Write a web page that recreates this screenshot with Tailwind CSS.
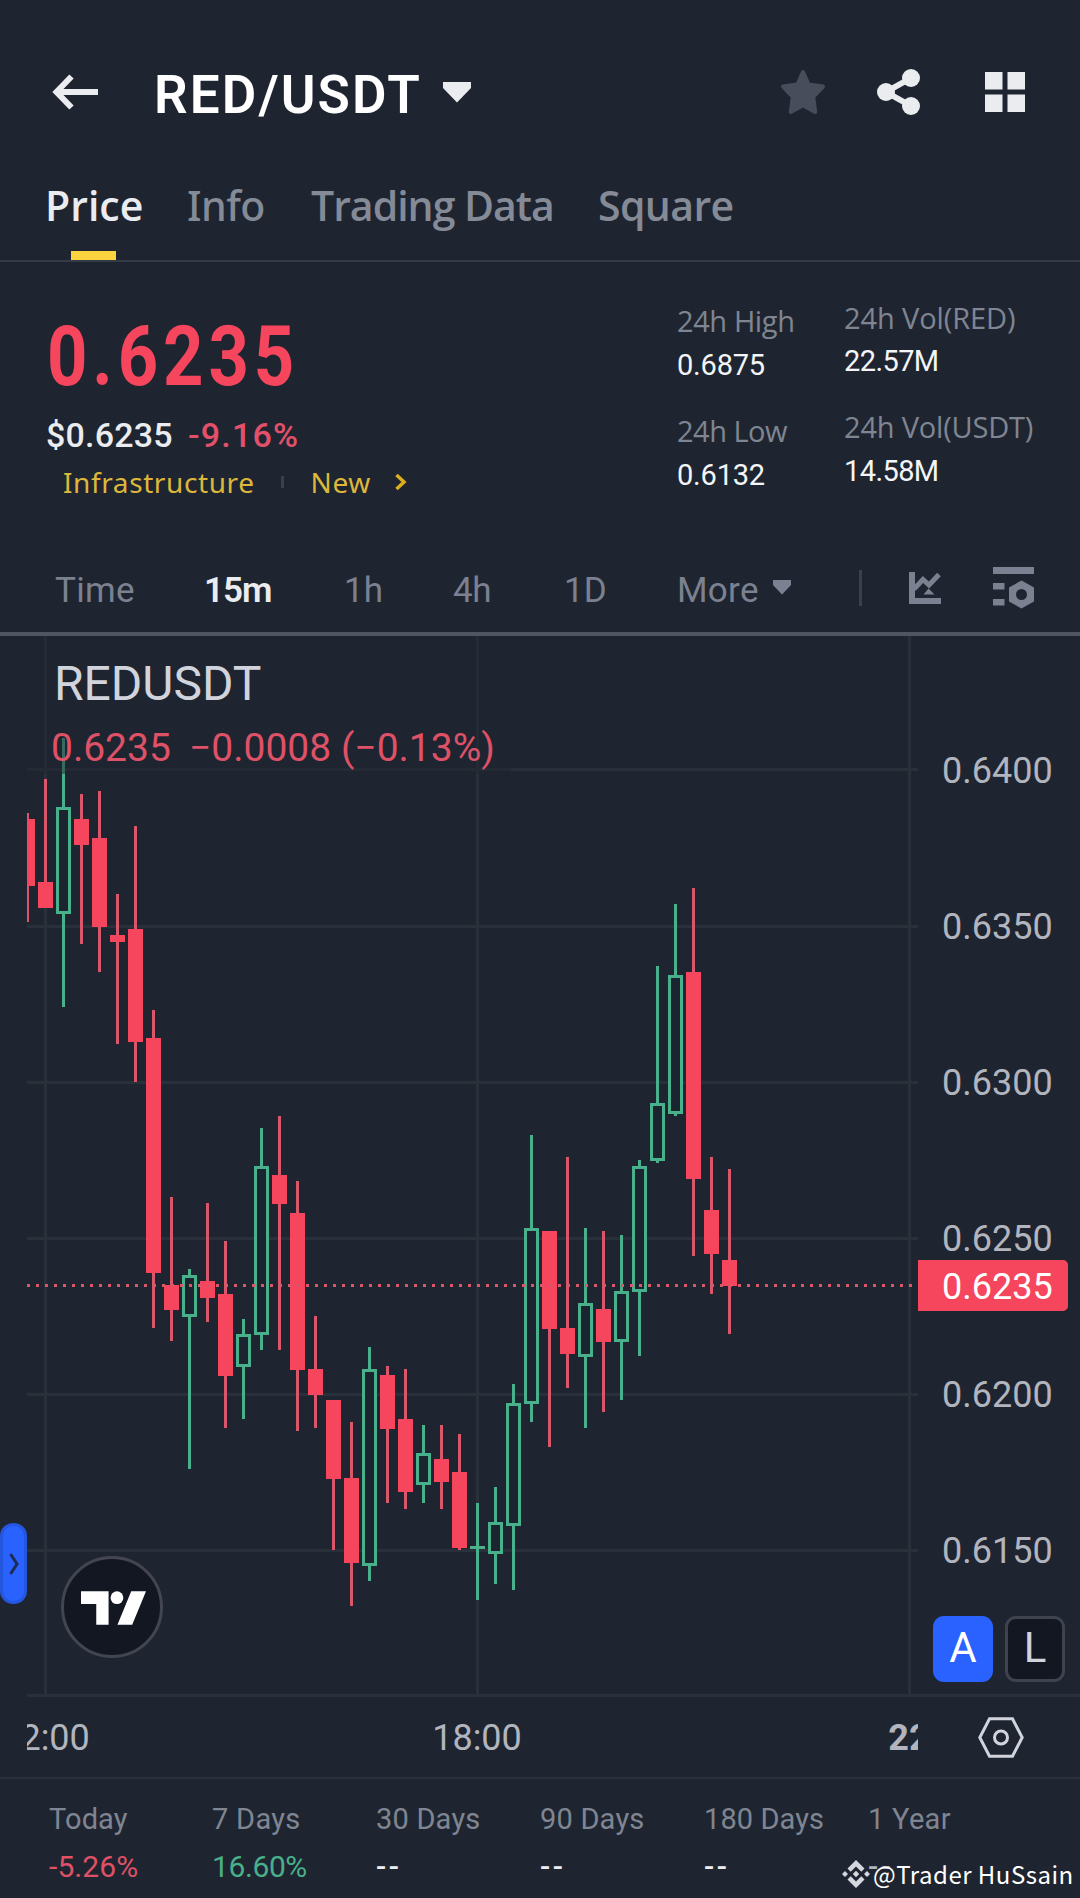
<!DOCTYPE html>
<html lang="en">
<head>
    <meta charset="UTF-8">
    <meta name="viewport" content="width=device-width, initial-scale=1.0">
    <title>RED/USDT</title>
    <script src="https://cdn.jsdelivr.net/npm/@tailwindcss/browser@4"></script>
</head>
<body class="bg-[#1f2530] font-['Roboto',sans-serif] leading-none whitespace-nowrap">
<div class="relative w-[1080px] h-[1898px] overflow-hidden">

    <header class="flex items-center h-[119px] pt-[65px] pl-[52px] pr-[55px]">
        <svg class="w-[47px] h-9" viewBox="0 0 47 36" fill="none" stroke="#eaecef" stroke-width="6">
            <path d="M19.5 2.5 4.5 18l15 15.5M5 18h41"/>
        </svg>
        <h1 class="ml-[55px] pt-[6px] text-[53px] leading-none font-semibold tracking-[2.1px] text-white">RED/USDT</h1>
        <svg class="ml-[21px] w-7 h-[22px]" viewBox="0 0 28 22" fill="#eaecef"><path d="M0 1h28v6L14 21.500 0 7z"/></svg>
        <div class="ml-auto flex items-center">
            <svg class="w-[46px] h-[46px]" viewBox="0 0 46 46" fill="#474d5a" stroke="#474d5a" stroke-width="4" stroke-linejoin="round">
                <path d="M23 3l5.600 12.500 14.400 2-9.800 10.300 2 15.200L23 36.200 10.800 43l2-15.200L3 17.500l14.400-2z"/>
            </svg>
            <svg class="ml-[51px] w-[43px] h-[48px]" viewBox="0 0 43 48" fill="#eaecef">
                <path d="M34 10 9 24l25 14" fill="none" stroke="#eaecef" stroke-width="6"/>
                <circle cx="9" cy="24" r="9"/><circle cx="34" cy="10" r="9"/><circle cx="34" cy="38" r="9"/>
            </svg>
            <svg class="ml-[65px] w-10 h-10" viewBox="0 0 40 40" fill="#eaecef">
                <path d="M0 0h17.500v17.500H0zM22.500 0H40v17.500H22.500zM0 22.500h17.500V40H0zM22.500 22.500H40V40H22.500z"/>
            </svg>
        </div>
    </header>

    <!-- page tabs -->
    <nav class="relative h-[143px] pt-[66px] pl-[45px] flex border-b-2 border-[#333a45] text-[41px] font-medium text-[#858a97] font-['Open_Sans','Noto_Sans',sans-serif]">
        <a class="relative w-[142px] font-semibold tracking-[0px] text-[#eaecef]">Price
            <span class="absolute left-[26px] bottom-0 w-[45px] h-[9px] bg-[#fad33f]"></span>
        </a>
        <a class="w-[124px] tracking-[-0.5px] font-['Noto_Sans',sans-serif]">Info</a>
        <a class="w-[287px] font-semibold tracking-[-1px]">Trading Data</a>
        <a class="font-semibold tracking-[-0.6px]">Square</a>
    </nav>

    <!-- ticker -->
    <section class="h-[286px] flex">
        <div class="w-[677px] pt-[53px] pl-[47px]">
            <div class="origin-left scale-x-[0.84] text-[84px] font-bold tracking-[5.8px] text-[#f6465d]">0.6235</div>
            <div class="mt-[19px] flex text-[34px] font-medium">
                <span class="w-[142px] -ml-px tracking-[0.2px] text-[#eaecef]">$0.6235</span>
                <span class="tracking-[1.2px] text-[#e2506a]">-9.16%</span>
            </div>
            <div class="mt-4 pl-4 flex items-center text-[28px] text-[#dcb73b] font-['Noto_Sans',sans-serif]">
                <span class="tracking-[0.6px]">Infrastructure</span>
                <span class="ml-[26px] w-[3px] h-3 bg-[#3a404c]"></span>
                <span class="ml-[27px] tracking-[0.6px]">New</span>
                <svg class="ml-[24px] w-3 h-[18px]" viewBox="0 0 12 18" fill="none" stroke="#dcae1c" stroke-width="3.500"><path d="M1.500 2 9 9l-7.500 7"/></svg>
            </div>
        </div>
        <dl class="w-[167px] pt-[44px] text-[29px]">
            <dt class="tracking-[-0.4px] text-[#7f8592] font-['Open_Sans',sans-serif]">24h High</dt>
            <dd class="mt-4 tracking-[-0.2px] text-[#f3f5f8]">0.6875</dd>
            <dt class="mt-[36px] tracking-[-0.5px] text-[#7f8592] font-['Open_Sans',sans-serif]">24h Low</dt>
            <dd class="mt-4 tracking-[-0.2px] text-[#f3f5f8]">0.6132</dd>
        </dl>
        <dl class="pt-[41px] text-[29px]">
            <dt class="tracking-[-0.1px] text-[#7f8592] font-['Open_Sans',sans-serif]">24h Vol(RED)</dt>
            <dd class="mt-[15px] tracking-[-0.6px] text-[#f3f5f8]">22.57M</dd>
            <dt class="mt-[36px] tracking-[-0.2px] text-[#7f8592] font-['Open_Sans',sans-serif]">24h Vol(USDT)</dt>
            <dd class="mt-4 tracking-[-0.6px] text-[#f3f5f8]">14.58M</dd>
        </dl>
    </section>

    <!-- intervals -->
    <nav class="h-[88px] pb-[5px] pl-[55px] flex items-center border-b-4 border-[#505661] text-[35px] text-[#7b8190]">
        <a class="pt-[5px] w-[149px] tracking-[0.3px]">Time</a>
        <a class="pt-[5px] w-[140px] font-semibold tracking-[-1px] text-[#eaecef]">15m</a>
        <a class="pt-[5px] w-[109px]">1h</a>
        <a class="pt-[5px] w-[111px] tracking-[-0.5px]">4h</a>
        <a class="pt-[5px] w-[113px]">1D</a>
        <a class="pt-[5px] w-[96px] tracking-[0.3px]">More</a>
        <svg class="w-[18px] h-[15px]" viewBox="0 0 18 15" fill="#7b8190"><path d="M0 0h18v5l-9 9.500L0 5z"/></svg>
        <span class="ml-[68px] w-[3px] h-9 bg-[#3a404c]"></span>
        <svg class="ml-[47px] w-8 h-8" viewBox="0 0 32 32" fill="#7b8190">
            <path d="M0 0h6v26h26v6H0z"/>
            <path d="M5 17l9-9.500 6 5.500L30 2.500" fill="none" stroke="#7b8190" stroke-width="5"/>
            <path d="M19.500 16.500l6 6h-11z"/>
        </svg>
        <svg class="ml-[52px] w-[41px] h-[43px]" viewBox="0 0 41 43" fill="#7b8190">
            <path d="M0 1h41v7H0zM0 17h11.500v6.500H0zM0 33h11.500v6.500H0z"/>
            <path d="M28.500 14.500 41 21.500v14l-12.500 7-12.500-7v-14zM28.500 23a5.500 5.500 0 100 11 5.500 5.500 0 000-11z" fill-rule="evenodd"/>
        </svg>
    </nav>

    <!-- chart -->
    <section class="relative h-[1061px] flex">
        <svg id="plot" class="ml-[27px] w-[891px] h-[1061px]" viewBox="27 636 891 1061" shape-rendering="crispEdges"></svg>
        <div class="relative flex-1 h-[1061px] pt-[57px] pl-[24px] border-b-[3px] border-[#2a303a] text-[36px] text-[#b2b5be]">
            <div class="h-[156px] flex items-center">0.6400</div>
            <div class="h-[156px] flex items-center">0.6350</div>
            <div class="h-[156px] flex items-center">0.6300</div>
            <div class="h-[156px] flex items-center">0.6250</div>
            <div class="h-[156px] flex items-center">0.6200</div>
            <div class="h-[156px] flex items-center">0.6150</div>
            <div class="absolute left-0 top-[624px] w-[150px] h-[51px] pt-0.5 pl-[24px] flex items-center rounded-r-[5px] bg-[#f6465d] text-white">0.6235</div>
            <div class="absolute left-[15px] top-[980px] flex gap-3 text-[42px]">
                <button class="w-[60px] h-[66px] pb-[2px] rounded-[11px] bg-[#2962ff] text-white">A</button>
                <button class="w-[60px] h-[66px] pb-[2px] rounded-[11px] border-[3px] border-[#3f434e] bg-[#131722] text-[#d1d4dc]">L</button>
            </div>
        </div>

        <div class="absolute left-[27px] top-0 w-[484px] h-[138px] pt-6 pl-[24px] bg-[#1f2530]/50">
            <div class="pl-[3px] text-[48px] text-[#d1d4dc]">REDUSDT</div>
            <div class="mt-[21px] flex text-[39px] text-[#de5167]">
                <span class="w-[138px]">0.6235</span>
                <span class="w-[152px]">−0.0008</span>
                <span>(−0.13%)</span>
            </div>
        </div>

        <div class="absolute left-0 top-[887px] w-[27px] h-[81px] flex items-center justify-center rounded-[13px] border-[3px] border-[#2556de] bg-[#2962ff]">
            <svg class="w-2.5 h-[22px]" viewBox="0 0 10 22" fill="none" stroke="#1f2b52" stroke-width="3"><path d="M1.500 1 8 11 1.500 21"/></svg>
        </div>

        <!-- TradingView badge -->
        <div class="absolute left-[61px] top-[920px] w-[102px] h-[102px] pt-0.5 pl-0.5 flex items-center justify-center rounded-full border-[3px] border-[#434651] bg-[#131722]">
            <svg class="w-[65px] h-[34px]" viewBox="0 0 66 34" fill="#fff">
                <path d="M0 0h28v34H15.500V13H0zM51 0h15L52 34H37z"/><circle cx="36.500" cy="6.500" r="6.500"/>
            </svg>
        </div>
    </section>

    <!-- time axis -->
    <section class="h-[82px] flex border-b-2 border-[#2a303a]">
        <svg class="ml-[27px] w-[891px] h-[80px] overflow-hidden" viewBox="27 1697 891 80" fill="#b2b5be" font-size="36" text-anchor="middle">
            <text x="45" y="1750">12:00</text>
            <text x="477" y="1750">18:00</text>
            <text x="909" y="1750" font-weight="700">22</text>
        </svg>
        <svg class="ml-[59px] mt-5 w-[47px] h-[41px]" viewBox="0 0 47 41" fill="none" stroke="#d1d4dc" stroke-width="3">
            <path d="M12.500 1.800h23L45.200 20.500 35.500 39.200h-23L2.800 20.500z"/><circle cx="24" cy="20.500" r="6.500"/>
        </svg>
    </section>

    <!-- performance -->
    <section class="pt-[26px] pl-[49px] flex text-[29px] text-[#7f8592]">
        <div class="w-[163px] tracking-[0.1px]">Today<p class="mt-[18px] text-[30px] leading-none text-[#de5167]">-5.26%</p></div>
        <div class="w-[164px] tracking-[0.3px]">7 Days<p class="mt-[18px] text-[30px] leading-none tracking-[-0.4px] text-[#48b08b]">16.60%</p></div>
        <div class="w-[164px] tracking-[0.2px]">30 Days<p class="mt-[18px] text-[30px] leading-none tracking-[2.5px] font-medium text-[#eaecef]">--</p></div>
        <div class="w-[164px] tracking-[0.2px]">90 Days<p class="mt-[18px] text-[30px] leading-none tracking-[2.5px] font-medium text-[#eaecef]">--</p></div>
        <div class="w-[164px] tracking-[0.1px]">180 Days<p class="mt-[18px] text-[30px] leading-none tracking-[2.5px] font-medium text-[#eaecef]">--</p></div>
        <div class="w-[164px] tracking-[0.3px]">1 Year<p class="mt-[18px] text-[30px] leading-none tracking-[2.5px] font-medium text-[#b2b5be]">--</p></div>
    </section>

    <!-- watermark -->
    <div class="absolute left-[842px] top-[1860px] flex items-center text-[24px] text-white font-['Noto_Sans_CJK_SC',sans-serif]">
        <svg class="w-7 h-7" viewBox="0 0 28 28" fill="#d6d8e0">
            <path d="M14 0l8.500 8.500-3.200 3.200L14 6.400l-5.300 5.300-3.200-3.200zM14 28l-8.500-8.500 3.200-3.200 5.300 5.300 5.300-5.300 3.200 3.200zM3 11l3 3-3 3-3-3zM25 11l3 3-3 3-3-3zM14 10.800l3.200 3.200-3.200 3.200-3.200-3.200z"/>
        </svg>
        <span class="ml-[3px] pb-px tracking-[0.5px]">@Trader HuSsain</span>
    </div>
</div>

<script>
    // [direction, high, body top, body bottom, low]
    const candles = [
        ['d', 813, 819, 886, 922], ['d', 779, 882, 908, 908], ['u', 738, 807, 914, 1007],
        ['d', 794, 819, 845, 944], ['d', 791, 838, 927, 972], ['d', 894, 935, 942, 1044],
        ['d', 826, 929, 1042, 1082], ['d', 1010, 1038, 1273, 1328], ['d', 1197, 1285, 1310, 1341],
        ['u', 1269, 1275, 1317, 1469], ['d', 1203, 1281, 1298, 1322], ['d', 1241, 1294, 1376, 1428],
        ['u', 1319, 1334, 1367, 1419], ['u', 1128, 1166, 1335, 1350], ['d', 1116, 1175, 1204, 1350],
        ['d', 1181, 1213, 1370, 1431], ['d', 1316, 1369, 1395, 1428], ['d', 1400, 1400, 1479, 1550],
        ['d', 1422, 1478, 1563, 1606], ['u', 1347, 1369, 1566, 1581], ['d', 1366, 1375, 1429, 1503],
        ['d', 1369, 1419, 1492, 1509], ['u', 1425, 1453, 1485, 1503], ['d', 1425, 1459, 1482, 1509],
        ['d', 1434, 1472, 1548, 1550], ['u', 1503, 1546, 1549, 1600], ['u', 1487, 1522, 1554, 1584],
        ['u', 1384, 1403, 1526, 1590], ['u', 1135, 1228, 1404, 1422], ['d', 1231, 1231, 1329, 1447],
        ['d', 1157, 1328, 1354, 1388], ['u', 1228, 1303, 1357, 1428], ['d', 1231, 1309, 1342, 1412],
        ['u', 1235, 1291, 1342, 1400], ['u', 1160, 1166, 1292, 1356], ['u', 966, 1103, 1161, 1163],
        ['u', 904, 975, 1114, 1116], ['d', 888, 972, 1179, 1256], ['d', 1157, 1210, 1254, 1294],
        ['d', 1169, 1260, 1286, 1334]
    ];

    const rect = (x, y, w, h, fill) => `<rect x="${x}" y="${y}" width="${w}" height="${h}" fill="${fill}"/>`;
    let out = '';

    [44, 476, 908].forEach(x => out += rect(x, 636, 3, 1058, '#2a303a'));
    [768, 925, 1081, 1237, 1393, 1549, 1694].forEach(y => out += rect(27, y, 891, 3, '#2a303a'));

    candles.forEach(([dir, high, top, bottom, low], i) => {
        const x = 20 + i * 18;
        const wick = dir === 'u' ? '#48b08b' : '#d9566b';
        out += rect(x + 6, high, 3, top - high, wick) + rect(x + 6, bottom, 3, low - bottom, wick);
        if (dir === 'd') {
            out += rect(x, top, 15, bottom - top, '#f6465d');
        } else {
            out += rect(x, top, 15, bottom - top, '#48b08b');
            if (bottom - top > 6) out += rect(x + 3, top + 3, 9, bottom - top - 6, '#1b2530');
        }
    });

    // last price
    for (let x = 27; x < 914; x += 9) out += rect(x, 1284, 3, 3, '#d9566b');

    document.getElementById('plot').innerHTML = out;
</script>
</body>
</html>
